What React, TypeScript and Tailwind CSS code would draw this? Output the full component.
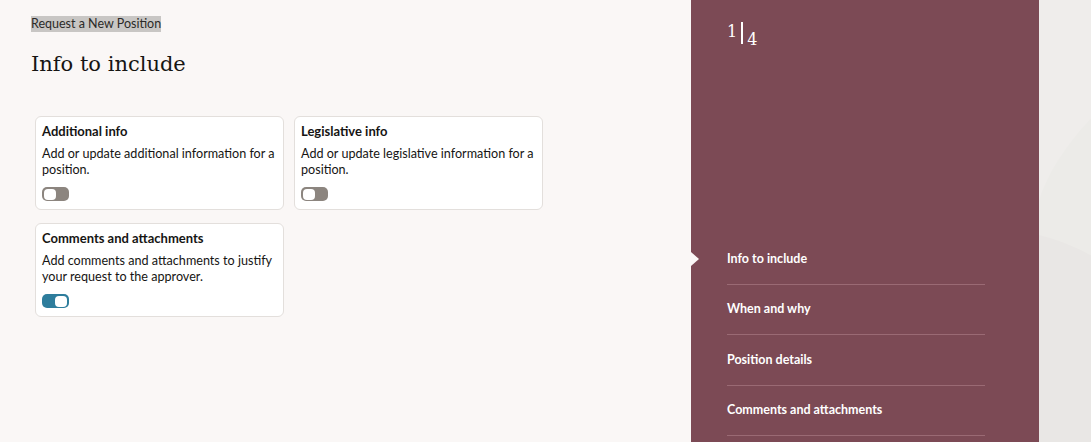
import React from "react";

function Toggle({ on }: { on: boolean }) {
  return (
    <div
      className={
        "mt-[9px] w-[27px] h-[14px] rounded-[5px] flex items-center px-[2px] " +
        (on ? "bg-[#2e7d9c] justify-end" : "bg-[#8c857f] justify-start")
      }
    >
      <div className="w-[12px] h-[11px] rounded-[4px] bg-white" />
    </div>
  );
}

function Card({ title, body, on }: { title: string; body: string; on: boolean }) {
  return (
    <div className="w-[249px] h-[94px] rounded-[6px] border border-[#e3dfdc] bg-white px-[6px] pt-[6px]">
      <div className="text-[13px] font-bold text-[#161513] leading-[16px]">{title}</div>
      <div className="mt-[7px] text-[12.6px] text-[#161513] leading-[16px]">{body}</div>
      <Toggle on={on} />
    </div>
  );
}

const steps = ["Info to include", "When and why", "Position details", "Comments and attachments"];

export default function App() {
  return (
    <div
      className="w-[1091px] h-[442px] flex overflow-hidden"
      style={{ fontFamily: 'Lato, "Noto Sans", sans-serif' }}
    >
      <div className="w-[691px] h-full bg-[#faf7f6] pl-[31px] pt-[16px]">
        <div className="flex">
          <span className="bg-[#c8c6c4] text-[12.5px] leading-[16px] text-[#2b2a28]">
            Request a New Position
          </span>
        </div>
        <h1
          className="mt-[18px] leading-[28px] text-[#161513]"
          style={{ fontFamily: '"DejaVu Serif", Georgia, serif', fontSize: "21px" }}
        >
          Info to include
        </h1>
        <div className="mt-[38px] ml-[4px] grid grid-cols-[249px_249px] gap-x-[10px] gap-y-[13px]">
          <Card title="Additional info" body="Add or update additional information for a position." on={false} />
          <Card title="Legislative info" body="Add or update legislative information for a position." on={false} />
          <Card
            title="Comments and attachments"
            body="Add comments and attachments to justify your request to the approver."
            on={true}
          />
        </div>
      </div>
      <div className="relative w-[348px] h-full bg-[#7c4a55] pl-[36px] pt-[22px] flex flex-col">
        <div
          className="flex items-start text-white"
          style={{ fontFamily: '"DejaVu Serif", Georgia, serif' }}
        >
          <span className="text-[16px] leading-[20px]">1</span>
          <span className="w-[2px] h-[22px] bg-white mx-[4px] mt-[0px]" />
          <span className="text-[16px] leading-[20px] mt-[8px]">4</span>
        </div>
        <div className="mt-[184px] w-[258px]">
          {steps.map((s) => (
            <div key={s} className="h-[50.5px] pt-[1px] border-b border-[#9a6a74] flex items-center text-white text-[12.5px] font-bold">
              {s}
            </div>
          ))}
        </div>
        <div className="absolute left-0 top-[252px] w-0 h-0 border-y-[7px] border-y-transparent border-l-[8px] border-l-[#faf7f6]" />
      </div>
      <div className="relative flex-1 h-full bg-[#efedeb] overflow-hidden">
        <svg className="absolute inset-0" width="52" height="442" viewBox="0 0 52 442">
          <path d="M60 110 C30 140 10 170 0 200 L0 442 L60 442 Z" fill="#ecebe8" />
          <path d="M0 235 C20 240 40 248 60 260 L60 442 L0 442 Z" fill="#e9e7e5" />
        </svg>
      </div>
    </div>
  );
}
